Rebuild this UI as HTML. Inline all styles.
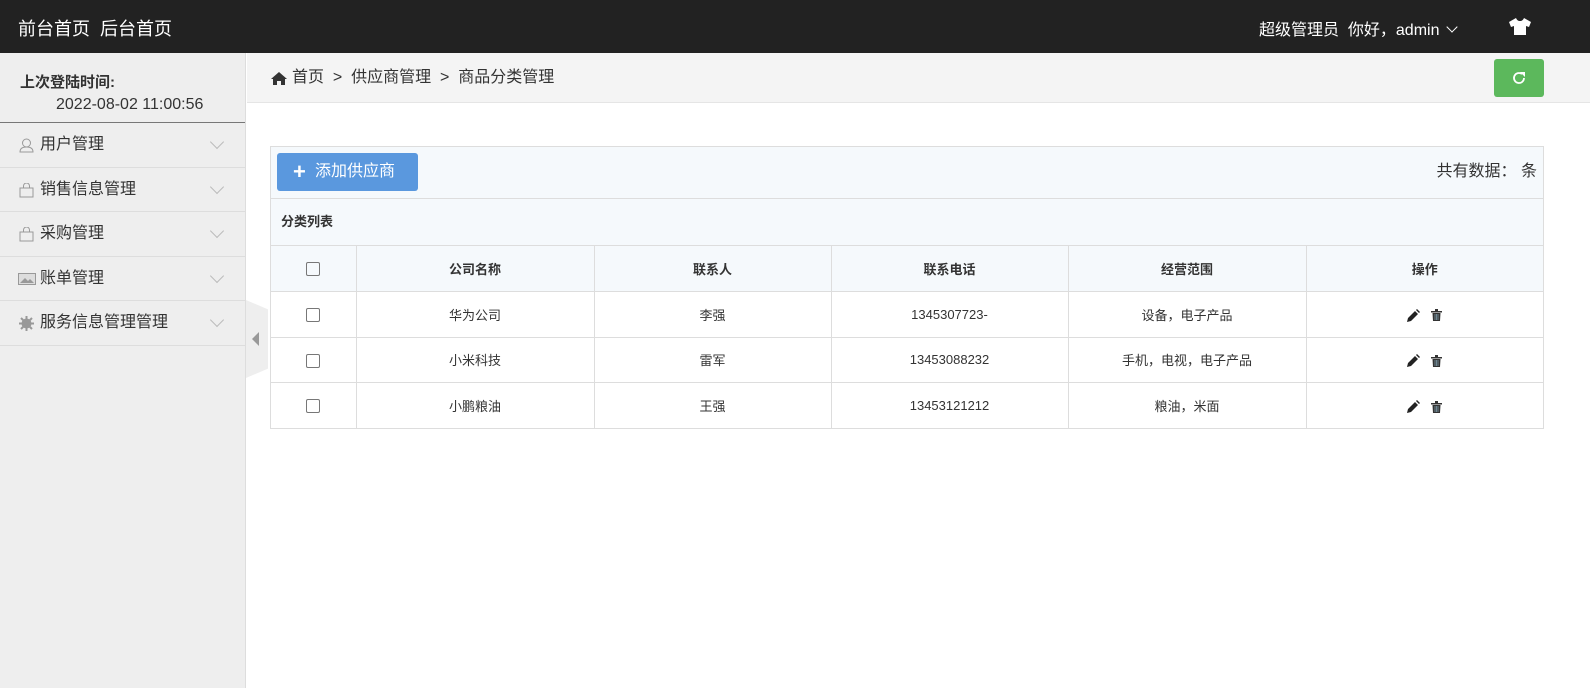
<!DOCTYPE html>
<html><head><meta charset="utf-8"><style>
*{margin:0;padding:0;box-sizing:border-box}
body{width:1590px;height:688px;overflow:hidden;background:#fff;font-family:"Liberation Sans","Noto Sans CJK SC",sans-serif;color:#333;position:relative}
.top{position:absolute;left:0;top:0;width:1590px;height:53px;background:#222;color:#fff}
.top .l{position:absolute;left:18px;top:15px;font-size:18px}
.top .r{position:absolute;left:1259px;top:16px;font-size:16px}
.side{position:absolute;left:0;top:53px;width:246px;height:635px;background:#eee;border-right:1px solid #ddd}
.login{height:70px;border-bottom:1px solid #777;padding:18px 0 0 20px}
.login b{font-size:15px;color:#333;display:block}
.login span{display:block;font-size:16px;margin:4px 0 0 36px}
.mi{height:44.5px;border-bottom:1px solid #ddd;font-size:16px;line-height:44px;padding-left:40px;position:relative}
.mi i{position:absolute;left:19px;top:15px;width:15px;height:14px;line-height:0}
.mi i svg{display:block}
.mi .ch{position:absolute;left:212px;top:14px;width:10px;height:10px;border-right:1px solid #bbb;border-bottom:1px solid #bbb;transform:rotate(45deg)}
.tab{position:absolute;left:246px;top:300px;width:22px;height:78px;background:#eee;clip-path:polygon(0 0,100% 12%,100% 88%,0 100%)}
.crumb{position:absolute;left:247px;top:53px;width:1343px;height:50px;background:#f4f4f4;border-bottom:1px solid #e5e5e5;font-size:16px;line-height:50px;padding-left:45px}
.ref{position:absolute;left:1494px;top:59px;width:50px;height:38px;background:#5cb85c;border-radius:3px}
.box{position:absolute;left:270px;top:146px;width:1274px;border:1px solid #ddd}
.tb{height:52px;background:#f5f9fc;border-bottom:1px solid #ddd;position:relative}
.btn{position:absolute;left:6px;top:6px;width:141px;height:38px;background:#5a98de;border-radius:3px;color:#fff;font-size:16px;line-height:38px;padding-left:38px}
.cnt{position:absolute;right:6px;top:10px;font-size:16px}
.ttl{height:47px;background:#f5f9fc;border-bottom:1px solid #ddd;font-size:13px;font-weight:bold;line-height:46px;padding-left:10px}
table{border-collapse:collapse;width:100%;font-size:13px}
td,th{border-right:1px solid #ddd;border-bottom:1px solid #ddd;text-align:center;height:45.5px}
th{background:#f5f9fc}
td:last-child,th:last-child{border-right:0}
tr:last-child td{border-bottom:0}
.cb{display:inline-block;width:14px;height:14px;border:1px solid #777;border-radius:2px;vertical-align:middle}
.ops svg{vertical-align:middle}
</style></head><body>
<div class="top"><div class="l">前台首页&nbsp;&nbsp;后台首页</div>
<div class="r">超级管理员&nbsp;&nbsp;你好，admin <span style="display:inline-block;width:8px;height:8px;border-right:1.5px solid #fff;border-bottom:1.5px solid #fff;transform:rotate(45deg);margin:0 0 4px 4px"></span></div>
<svg style="position:absolute;left:1509px;top:18px" width="22" height="17" viewBox="0 0 22 17"><path d="M7 0L0 4l2 5 3-1v9h12V8l3 1 2-5-7-4c-1 2-2 3-4 3S8 2 7 0z" fill="#fff"/></svg></div>
<div class="side">
<div class="login"><b>上次登陆时间:</b><span>2022-08-02 11:00:56</span></div>
<div class="mi"><i><svg width="15" height="15"><circle cx="7.5" cy="5" r="4" fill="none" stroke="#999"/><path d="M1 14c0-4 3-5 6.5-5s6.5 1 6.5 5z" fill="none" stroke="#999"/></svg></i>用户管理<span class="ch"></span></div>
<div class="mi"><i><svg width="15" height="15"><rect x="1" y="5" width="13" height="9" fill="none" stroke="#999"/><path d="M4.5 5V3a3 3 0 0 1 6 0v2" fill="none" stroke="#999"/></svg></i>销售信息管理<span class="ch"></span></div>
<div class="mi"><i><svg width="15" height="15"><rect x="1" y="5" width="13" height="9" fill="none" stroke="#999"/><path d="M4.5 5V3a3 3 0 0 1 6 0v2" fill="none" stroke="#999"/></svg></i>采购管理<span class="ch"></span></div>
<div class="mi"><i style="left:18px"><svg width="18" height="14"><rect x="0.5" y="1.5" width="17" height="11" fill="#ddd" stroke="#999"/><path d="M2 11l5-5 3 3 2-2 4 4z" fill="#999"/></svg></i>账单管理<span class="ch"></span></div>
<div class="mi"><i><svg width="15" height="15"><circle cx="7.5" cy="7.5" r="5" fill="#999"/><circle cx="7.5" cy="7.5" r="2" fill="#eee"/><path d="M7.5 0v15M0 7.5h15M2 2l11 11M13 2L2 13" stroke="#999" stroke-width="2"/></svg></i>服务信息管理管理<span class="ch"></span></div>
</div>
<div class="tab"><div style="position:absolute;left:6px;top:32px;border-right:7px solid #999;border-top:7px solid transparent;border-bottom:7px solid transparent"></div></div>
<div class="crumb"><svg style="position:absolute;left:24px;top:19px" width="16" height="13" viewBox="0 0 16 13"><path d="M8 0L0 7h2v6h4V9h4v4h4V7h2z" fill="#333"/></svg>首页 &nbsp;&gt;&nbsp; 供应商管理 &nbsp;&gt;&nbsp; 商品分类管理</div>
<div class="ref"><svg style="position:absolute;left:17px;top:11px" width="16" height="16" viewBox="0 0 16 16"><path d="M13 8a5 5 0 1 1-2-4" fill="none" stroke="#fff" stroke-width="1.8"/><path d="M9 2h5v5z" fill="#fff"/></svg></div>
<div class="box">
<div class="tb"><div class="btn"><span style="position:absolute;left:16px;top:0;font-size:22px;font-weight:bold">+</span>添加供应商</div><div class="cnt">共有数据： 条</div></div>
<div class="ttl">分类列表</div>
<table>
<tr><th style="width:85px"><span class="cb"></span></th><th style="width:238px">公司名称</th><th style="width:237px">联系人</th><th style="width:237px">联系电话</th><th style="width:238px">经营范围</th><th>操作</th></tr>
<tr><td><span class="cb"></span></td><td>华为公司</td><td>李强</td><td>1345307723-</td><td>设备，电子产品</td><td class="ops"><svg width="13" height="13" viewBox="0 0 13 13"><path d="M0 13l1-4 7-7 3 3-7 7zM9 1l1-1 3 3-1 1z" fill="#222"/></svg>&nbsp;&nbsp;&nbsp;<svg width="11" height="12" viewBox="0 0 11 12"><path d="M0 2h11v1.5H0zM4 0h3v2H4zM1.5 4h8l-.5 8H2z" fill="#333"/><path d="M4 5v6M5.5 5v6M7 5v6" stroke="#8ab" stroke-width=".7"/></svg></td></tr>
<tr><td><span class="cb"></span></td><td>小米科技</td><td>雷军</td><td>13453088232</td><td>手机，电视，电子产品</td><td class="ops"><svg width="13" height="13" viewBox="0 0 13 13"><path d="M0 13l1-4 7-7 3 3-7 7zM9 1l1-1 3 3-1 1z" fill="#222"/></svg>&nbsp;&nbsp;&nbsp;<svg width="11" height="12" viewBox="0 0 11 12"><path d="M0 2h11v1.5H0zM4 0h3v2H4zM1.5 4h8l-.5 8H2z" fill="#333"/><path d="M4 5v6M5.5 5v6M7 5v6" stroke="#8ab" stroke-width=".7"/></svg></td></tr>
<tr><td><span class="cb"></span></td><td>小鹏粮油</td><td>王强</td><td>13453121212</td><td>粮油，米面</td><td class="ops"><svg width="13" height="13" viewBox="0 0 13 13"><path d="M0 13l1-4 7-7 3 3-7 7zM9 1l1-1 3 3-1 1z" fill="#222"/></svg>&nbsp;&nbsp;&nbsp;<svg width="11" height="12" viewBox="0 0 11 12"><path d="M0 2h11v1.5H0zM4 0h3v2H4zM1.5 4h8l-.5 8H2z" fill="#333"/><path d="M4 5v6M5.5 5v6M7 5v6" stroke="#8ab" stroke-width=".7"/></svg></td></tr>
</table></div>
</body></html>
